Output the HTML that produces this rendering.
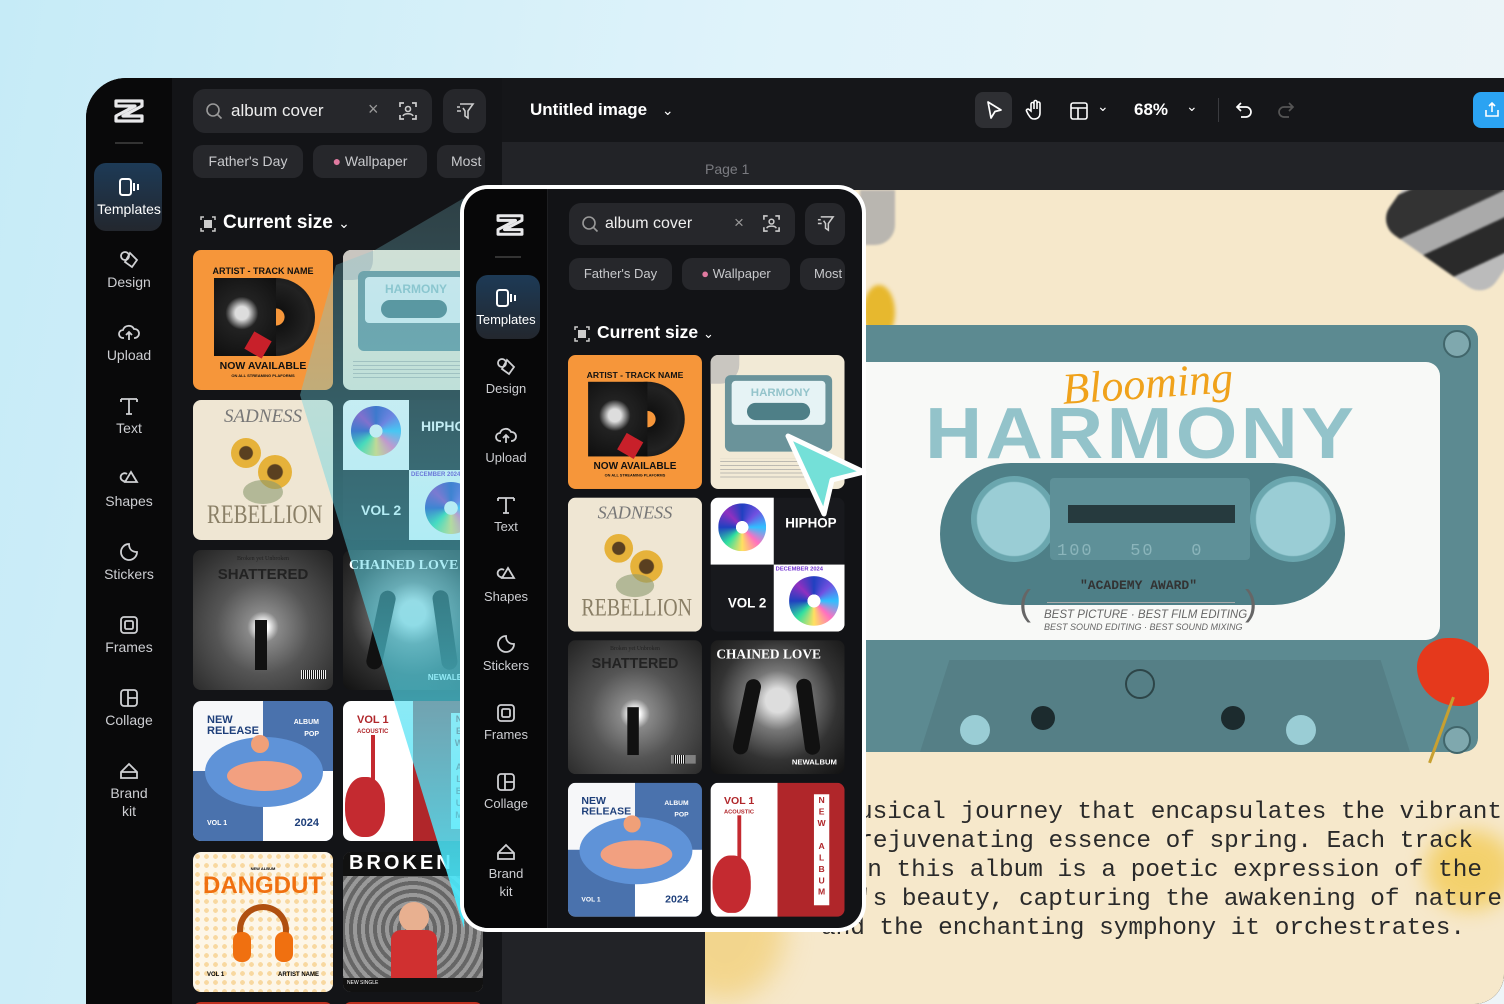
<!DOCTYPE html>
<html><head><meta charset="utf-8">
<style>
*{box-sizing:border-box;margin:0;padding:0}
body{width:1504px;height:1004px;overflow:hidden;position:relative;font-family:"Liberation Sans",sans-serif;background:linear-gradient(100deg,#c6ebf7 0%,#dff3fa 45%,#eef5f8 100%)}
.abs{position:absolute}
.win{left:86px;top:78px;width:1418px;height:926px;border-radius:40px 0 30px 0;overflow:hidden;background:#0a0a0b}
.side{left:0;top:0;width:86px;height:926px;background:#09090a}
.nav{position:absolute;left:0;width:86px;text-align:center;color:#cdced2;font-size:14px;line-height:18px}
.nav svg{display:block;margin:0 auto 3px}
.panel{left:86px;top:0;width:330px;height:926px;background:#131417;overflow:hidden}
.search{background:#26272b;border-radius:12px}
.chip{background:#26272b;border-radius:10px;color:#c8c9cc;font-size:14px;text-align:center;white-space:nowrap;overflow:hidden}
.card{position:absolute;width:140px;height:140px;border-radius:8px;overflow:hidden}
.cd{position:absolute;border-radius:50%;background:radial-gradient(circle,#fff 0 18%,transparent 19%),conic-gradient(#2040c0,#7050e0,#30c0ff,#ff70c0,#ffe060,#30e0a0,#2040c0,#9030c0,#2040c0)}
.mono{font-family:"Liberation Mono",monospace}
.cond{font-family:"Liberation Sans Narrow","Liberation Sans",sans-serif;font-weight:bold}
</style></head><body>

<div class="abs win">
 <div class="abs side">
  <svg class="abs" style="left:27px;top:20px" width="32" height="26" viewBox="0 0 32 26"><path d="M3 3h26v5L10 18h19v5H3v-5l19-10H3z" fill="none" stroke="#e8e8ea" stroke-width="3.2" stroke-linejoin="round"/></svg>
  <div class="abs" style="left:29px;top:64px;width:28px;height:2px;background:#333"></div>
  <div class="abs" style="left:8px;top:85px;width:68px;height:68px;border-radius:12px;background:linear-gradient(180deg,#1d3a56,#23272e)"></div>
  <div class="nav" style="top:99px;color:#fff"><svg width="22" height="20" viewBox="0 0 22 20"><rect x="2" y="2" width="11" height="16" rx="2.5" fill="none" stroke="#fff" stroke-width="2"/><path d="M16 6v8M20 7v6" stroke="#fff" stroke-width="2"/></svg>Templates</div>
  <div class="nav" style="top:172px"><svg width="22" height="20" viewBox="0 0 22 20"><circle cx="7" cy="6" r="4" fill="none" stroke="#cfd0d3" stroke-width="1.8"/><path d="M12 3l7 7-5 7-7-5z" fill="none" stroke="#cfd0d3" stroke-width="1.8"/></svg>Design</div>
  <div class="nav" style="top:245px"><svg width="22" height="20" viewBox="0 0 22 20"><path d="M6 15H5a4 4 0 010-8 6 6 0 0111-1 4.5 4.5 0 011 9h-1M11 17V9M8 12l3-3 3 3" fill="none" stroke="#cfd0d3" stroke-width="1.8"/></svg>Upload</div>
  <div class="nav" style="top:318px"><svg width="22" height="20" viewBox="0 0 22 20"><path d="M3 3h16M11 3v15M3 3v3M19 3v3M8 18h6" fill="none" stroke="#cfd0d3" stroke-width="1.8"/></svg>Text</div>
  <div class="nav" style="top:391px"><svg width="22" height="20" viewBox="0 0 22 20"><path d="M9 5a4 4 0 10-1 7M13 3l6 10h-12z" fill="none" stroke="#cfd0d3" stroke-width="1.8"/></svg>Shapes</div>
  <div class="nav" style="top:464px"><svg width="22" height="20" viewBox="0 0 22 20"><path d="M19 10a8 8 0 11-8-8c0 5 3 8 8 8z" fill="none" stroke="#cfd0d3" stroke-width="1.8"/></svg>Stickers</div>
  <div class="nav" style="top:537px"><svg width="22" height="20" viewBox="0 0 22 20"><rect x="3" y="2" width="16" height="16" rx="3" fill="none" stroke="#cfd0d3" stroke-width="1.8"/><rect x="7" y="6" width="8" height="8" rx="1.5" fill="none" stroke="#cfd0d3" stroke-width="1.8"/></svg>Frames</div>
  <div class="nav" style="top:610px"><svg width="22" height="20" viewBox="0 0 22 20"><rect x="3" y="2" width="16" height="16" rx="3" fill="none" stroke="#cfd0d3" stroke-width="1.8"/><path d="M10 2v16M10 10h9" stroke="#cfd0d3" stroke-width="1.8"/></svg>Collage</div>
  <div class="nav" style="top:683px"><svg width="22" height="20" viewBox="0 0 22 20"><path d="M3 11l8-8 8 8v6H3zM3 11h16" fill="none" stroke="#cfd0d3" stroke-width="1.8"/></svg>Brand<br>kit</div>
 </div>

 <div class="abs panel">
  <div class="abs search" style="left:21px;top:11px;width:239px;height:44px">
   <svg class="abs" style="left:12px;top:13px" width="18" height="18" viewBox="0 0 18 18"><circle cx="8" cy="8" r="6" fill="none" stroke="#999" stroke-width="1.6"/><path d="M12.5 12.5l4 4" stroke="#999" stroke-width="1.6"/></svg>
   <div class="abs" style="left:38px;top:12px;color:#eee;font-size:17px">album cover</div>
   <div class="abs" style="left:175px;top:10px;color:#999;font-size:18px">×</div>
   <svg class="abs" style="left:205px;top:12px" width="20" height="20" viewBox="0 0 20 20"><path d="M2 6V2h4M14 2h4v4M18 14v4h-4M6 18H2v-4" fill="none" stroke="#ccc" stroke-width="1.7"/><circle cx="10" cy="8" r="2.5" fill="none" stroke="#ccc" stroke-width="1.6"/><path d="M5 15c1-3 9-3 10 0" fill="none" stroke="#ccc" stroke-width="1.6"/></svg>
  </div>
  <div class="abs search" style="left:271px;top:11px;width:43px;height:44px">
   <svg class="abs" style="left:12px;top:12px" width="20" height="20" viewBox="0 0 20 20"><path d="M5 3h13l-5 7v7l-3-2v-5L8 7M2 6h3M2 10h4" fill="none" stroke="#ccc" stroke-width="1.6"/></svg>
  </div>
  <div class="abs chip" style="left:21px;top:67px;width:110px;height:33px;line-height:33px">Father's Day</div>
  <div class="abs chip" style="left:141px;top:67px;width:114px;height:33px;line-height:33px"><span style="color:#e07aa0">●</span> Wallpaper</div>
  <div class="abs chip" style="left:265px;top:67px;width:48px;height:33px;line-height:33px;text-align:left;padding-left:14px">Most</div>
  <svg class="abs" style="left:28px;top:138px" width="16" height="16" viewBox="0 0 16 16"><path d="M1 4V1h3M12 1h3v3M15 12v3h-3M4 15H1v-3" fill="none" stroke="#ccc" stroke-width="1.5"/><rect x="4" y="4" width="8" height="8" fill="#ccc"/></svg>
  <div class="abs" style="left:51px;top:134px;color:#fff;font-size:19px;font-weight:bold">Current size <span style="font-weight:normal;font-size:14px">⌄</span></div>
  <div id="lg"></div>
 </div>

 <div class="abs" style="left:416px;top:0;width:1002px;height:64px;background:#151619">
  <div class="abs" style="left:28px;top:22px;color:#fff;font-size:17px;font-weight:bold">Untitled image <span style="font-weight:normal;font-size:14px;margin-left:10px">⌄</span></div>
  <div class="abs" style="left:473px;top:14px;width:37px;height:36px;border-radius:8px;background:#2e2f33"></div>
  <svg class="abs" style="left:482px;top:22px" width="20" height="20" viewBox="0 0 20 20"><path d="M4 2l13 8-6 1.5L7 18z" fill="none" stroke="#fff" stroke-width="1.7" stroke-linejoin="round"/></svg>
  <svg class="abs" style="left:522px;top:21px" width="22" height="22" viewBox="0 0 22 22"><path d="M7 12V5a1.5 1.5 0 013 0v5V3a1.5 1.5 0 013 0v7V4.5a1.5 1.5 0 013 0V14c0 4-2.5 6-6 6-3 0-4-2-6-5l-1.5-3a1.5 1.5 0 012.5-1.5z" fill="none" stroke="#fff" stroke-width="1.6"/></svg>
  <svg class="abs" style="left:567px;top:23px" width="20" height="20" viewBox="0 0 20 20"><rect x="2" y="2" width="16" height="16" rx="2" fill="none" stroke="#fff" stroke-width="1.6"/><path d="M2 7h16M9 7v11" stroke="#fff" stroke-width="1.6"/></svg>
  <div class="abs" style="left:595px;top:20px;color:#fff;font-size:14px">⌄</div>
  <div class="abs" style="left:632px;top:22px;color:#fff;font-size:17px;font-weight:bold">68%</div>
  <div class="abs" style="left:684px;top:20px;color:#fff;font-size:14px">⌄</div>
  <div class="abs" style="left:716px;top:20px;width:1px;height:24px;background:#3a3b3f"></div>
  <svg class="abs" style="left:732px;top:22px" width="20" height="20" viewBox="0 0 20 20"><path d="M7 3L3 7l4 4M3 7h9a5 5 0 010 10H7" fill="none" stroke="#fff" stroke-width="1.7"/></svg>
  <svg class="abs" style="left:774px;top:22px" width="20" height="20" viewBox="0 0 20 20"><path d="M13 3l4 4-4 4M17 7H8a5 5 0 000 10h5" fill="none" stroke="#555" stroke-width="1.7"/></svg>
  <div class="abs" style="left:971px;top:14px;width:40px;height:36px;border-radius:8px 0 0 8px;background:#2ba3f2"></div>
  <svg class="abs" style="left:981px;top:23px" width="18" height="18" viewBox="0 0 18 18"><path d="M9 2v9M6 5l3-3 3 3M3 9v6h12V9" fill="none" stroke="#fff" stroke-width="1.6"/></svg>
 </div>

 <div class="abs" style="left:416px;top:64px;width:1002px;height:862px;background:#222327">
  <div class="abs" style="left:203px;top:19px;color:#7a7b80;font-size:14px">Page 1</div>
 </div>

 <div class="abs" style="left:619px;top:112px;width:799px;height:814px;background:#f6e8cb;overflow:hidden">
  <div class="abs" style="left:155px;top:0;width:35px;height:55px;background:#b9b6b0;border-radius:0 0 20px 0;filter:blur(1px)"></div>
  <div class="abs" style="left:690px;top:-20px;width:130px;height:100px;background:linear-gradient(120deg,#d0cdc8 0 20%,#333 20% 45%,#aaa 45% 60%,#2a2a2a 60% 80%,#bbb 80%);transform:rotate(35deg);border-radius:20px;filter:blur(1px)"></div>
  <div class="abs" style="left:158px;top:95px;width:32px;height:55px;background:#e7b82e;border-radius:50%;filter:blur(2px)"></div>
  <div class="abs" style="left:-40px;top:670px;width:120px;height:140px;background:#f0c450;border-radius:50%;filter:blur(14px);opacity:.5"></div>
  <div class="abs" style="left:720px;top:640px;width:90px;height:80px;background:#f2c230;border-radius:50%;filter:blur(10px);opacity:.6"></div>
  <div class="abs" style="left:100px;top:135px;width:673px;height:427px;background:#5c8a91;border-radius:14px"></div>
  <div class="abs" style="left:100px;top:172px;width:635px;height:278px;background:#f8f9f7;border-radius:0 14px 14px 0"></div>
  <div class="abs" style="left:220px;top:203px;color:#93c3ca;font-weight:bold;font-size:72px;letter-spacing:3px;transform:scaleX(1.1);transform-origin:left;line-height:1.15">HARMONY</div>
  <div class="abs" style="left:357px;top:168px;color:#f0a21b;font-family:'Liberation Serif',serif;font-style:italic;font-size:44px;transform:rotate(-4deg)">Blooming</div>
  <div class="abs" style="left:235px;top:273px;width:405px;height:142px;background:#4e7f87;border-radius:71px"></div>
  <div class="abs" style="left:266px;top:286px;width:86px;height:86px;border-radius:50%;background:radial-gradient(circle,#9acdd5 0 60%,#6aa6ae 62%)"></div>
  <div class="abs" style="left:545px;top:286px;width:86px;height:86px;border-radius:50%;background:radial-gradient(circle,#9acdd5 0 60%,#6aa6ae 62%)"></div>
  <div class="abs" style="left:345px;top:288px;width:200px;height:82px;background:#5e9098;border-radius:4px"></div>
  <div class="abs" style="left:363px;top:315px;width:167px;height:18px;background:#263a3e"></div>
  <div class="abs mono" style="left:352px;top:352px;color:#8bb5bb;font-size:17px;letter-spacing:2px">100&nbsp;&nbsp;&nbsp;50&nbsp;&nbsp;&nbsp;0</div>
  <div class="abs mono" style="left:375px;top:388px;color:#333;font-size:13px;font-weight:bold">"ACADEMY AWARD"</div>
  <div class="abs" style="left:342px;top:412px;width:188px;height:1px;background:#aaa"></div>
  <div class="abs" style="left:339px;top:419px;color:#666;font-size:11.5px;font-style:italic">BEST PICTURE · BEST FILM EDITING</div>
  <div class="abs" style="left:339px;top:432px;color:#666;font-size:9px;font-style:italic">BEST SOUND EDITING · BEST SOUND MIXING</div>
  <div class="abs" style="left:314px;top:392px;color:#666;font-size:36px">(</div>
  <div class="abs" style="left:540px;top:392px;color:#666;font-size:36px">)</div>
  <div class="abs" style="left:215px;top:470px;width:490px;height:92px;background:#557f86;clip-path:polygon(6% 0,94% 0,100% 100%,0 100%)"></div>
  <div class="abs" style="left:420px;top:479px;width:30px;height:30px;border-radius:50%;border:2px solid #2d4548"></div>
  <div class="abs" style="left:255px;top:525px;width:30px;height:30px;border-radius:50%;background:#9acdd5"></div>
  <div class="abs" style="left:326px;top:516px;width:24px;height:24px;border-radius:50%;background:#1c2b2e"></div>
  <div class="abs" style="left:516px;top:516px;width:24px;height:24px;border-radius:50%;background:#1c2b2e"></div>
  <div class="abs" style="left:581px;top:525px;width:30px;height:30px;border-radius:50%;background:#9acdd5"></div>
  <div class="abs" style="left:738px;top:140px;width:28px;height:28px;border-radius:50%;background:#7fa8ae;border:2px solid #41666b"></div>
  <div class="abs" style="left:738px;top:536px;width:28px;height:28px;border-radius:50%;background:#7fa8ae;border:2px solid #41666b"></div>
  <div class="abs" style="left:712px;top:448px;width:72px;height:68px;background:#e5391c;border-radius:45% 55% 40% 60%"></div>
  <div class="abs" style="left:735px;top:505px;width:3px;height:70px;background:#c8a030;transform:rotate(20deg)"></div>
  <div class="abs mono" style="right:2px;top:609px;font-size:24.4px;color:#2a2a2a;white-space:nowrap">This album is a musical journey that encapsulates the vibrant</div>
  <div class="abs mono" style="right:31px;top:638px;font-size:24.4px;color:#2a2a2a;white-space:nowrap">and rejuvenating essence of spring. Each track</div>
  <div class="abs mono" style="right:22px;top:667px;font-size:24.4px;color:#2a2a2a;white-space:nowrap">within this album is a poetic expression of the</div>
  <div class="abs mono" style="right:2px;top:696px;font-size:24.4px;color:#2a2a2a;white-space:nowrap">season's beauty, capturing the awakening of nature</div>
  <div class="abs mono" style="right:39px;top:725px;font-size:24.4px;color:#2a2a2a;white-space:nowrap">and the enchanting symphony it orchestrates.</div>
 </div>
</div>

<svg class="abs" style="left:0;top:0" width="1504" height="1004">
 <defs><linearGradient id="wg" x1="0" y1="0" x2="0" y2="1"><stop offset="0" stop-color="#7fc6d2" stop-opacity=".25"/><stop offset=".5" stop-color="#5ad8ea" stop-opacity=".5"/><stop offset="1" stop-color="#48ecff" stop-opacity=".95"/></linearGradient></defs>
 <polygon points="375,250 464,198 464,928 300,395 336,265" fill="url(#wg)"/>
</svg>

<div class="abs" style="left:460px;top:185px;width:406px;height:747px;border-radius:28px;background:#fff;padding:4px">
 <div style="position:relative;width:398px;height:739px;border-radius:24px;background:#121316;overflow:hidden">
  <div class="abs" style="left:0;top:0;width:84px;height:739px;background:#070708;border-right:1px solid #1e1f22"></div>
  <svg class="abs" style="left:31px;top:24px" width="30" height="24" viewBox="0 0 32 26"><path d="M3 3h26v5L10 18h19v5H3v-5l19-10H3z" fill="none" stroke="#e8e8ea" stroke-width="3.2" stroke-linejoin="round"/></svg>
  <div class="abs" style="left:31px;top:67px;width:26px;height:2px;background:#333"></div>
  <div class="abs" style="left:12px;top:86px;width:64px;height:64px;border-radius:12px;background:linear-gradient(180deg,#1d3a56,#23272e)"></div>
  <div class="nav" style="width:84px;top:99px;color:#fff;font-size:13px"><svg width="22" height="20" viewBox="0 0 22 20"><rect x="2" y="2" width="11" height="16" rx="2.5" fill="none" stroke="#fff" stroke-width="2"/><path d="M16 6v8M20 7v6" stroke="#fff" stroke-width="2"/></svg>Templates</div>
  <div class="nav" style="width:84px;top:168px;font-size:13px"><svg width="22" height="20" viewBox="0 0 22 20"><circle cx="7" cy="6" r="4" fill="none" stroke="#cfd0d3" stroke-width="1.8"/><path d="M12 3l7 7-5 7-7-5z" fill="none" stroke="#cfd0d3" stroke-width="1.8"/></svg>Design</div>
  <div class="nav" style="width:84px;top:237px;font-size:13px"><svg width="22" height="20" viewBox="0 0 22 20"><path d="M6 15H5a4 4 0 010-8 6 6 0 0111-1 4.5 4.5 0 011 9h-1M11 17V9M8 12l3-3 3 3" fill="none" stroke="#cfd0d3" stroke-width="1.8"/></svg>Upload</div>
  <div class="nav" style="width:84px;top:306px;font-size:13px"><svg width="22" height="20" viewBox="0 0 22 20"><path d="M3 3h16M11 3v15M3 3v3M19 3v3M8 18h6" fill="none" stroke="#cfd0d3" stroke-width="1.8"/></svg>Text</div>
  <div class="nav" style="width:84px;top:376px;font-size:13px"><svg width="22" height="20" viewBox="0 0 22 20"><path d="M9 5a4 4 0 10-1 7M13 3l6 10h-12z" fill="none" stroke="#cfd0d3" stroke-width="1.8"/></svg>Shapes</div>
  <div class="nav" style="width:84px;top:445px;font-size:13px"><svg width="22" height="20" viewBox="0 0 22 20"><path d="M19 10a8 8 0 11-8-8c0 5 3 8 8 8z" fill="none" stroke="#cfd0d3" stroke-width="1.8"/></svg>Stickers</div>
  <div class="nav" style="width:84px;top:514px;font-size:13px"><svg width="22" height="20" viewBox="0 0 22 20"><rect x="3" y="2" width="16" height="16" rx="3" fill="none" stroke="#cfd0d3" stroke-width="1.8"/><rect x="7" y="6" width="8" height="8" rx="1.5" fill="none" stroke="#cfd0d3" stroke-width="1.8"/></svg>Frames</div>
  <div class="nav" style="width:84px;top:583px;font-size:13px"><svg width="22" height="20" viewBox="0 0 22 20"><rect x="3" y="2" width="16" height="16" rx="3" fill="none" stroke="#cfd0d3" stroke-width="1.8"/><path d="M10 2v16M10 10h9" stroke="#cfd0d3" stroke-width="1.8"/></svg>Collage</div>
  <div class="nav" style="width:84px;top:653px;font-size:13px"><svg width="22" height="20" viewBox="0 0 22 20"><path d="M3 11l8-8 8 8v6H3zM3 11h16" fill="none" stroke="#cfd0d3" stroke-width="1.8"/></svg>Brand<br>kit</div>

  <div class="abs search" style="left:105px;top:14px;width:226px;height:42px">
   <svg class="abs" style="left:12px;top:12px" width="18" height="18" viewBox="0 0 18 18"><circle cx="8" cy="8" r="6" fill="none" stroke="#999" stroke-width="1.6"/><path d="M12.5 12.5l4 4" stroke="#999" stroke-width="1.6"/></svg>
   <div class="abs" style="left:36px;top:12px;color:#eee;font-size:16px">album cover</div>
   <div class="abs" style="left:165px;top:10px;color:#999;font-size:17px">×</div>
   <svg class="abs" style="left:193px;top:11px" width="19" height="19" viewBox="0 0 20 20"><path d="M2 6V2h4M14 2h4v4M18 14v4h-4M6 18H2v-4" fill="none" stroke="#ccc" stroke-width="1.7"/><circle cx="10" cy="8" r="2.5" fill="none" stroke="#ccc" stroke-width="1.6"/><path d="M5 15c1-3 9-3 10 0" fill="none" stroke="#ccc" stroke-width="1.6"/></svg>
  </div>
  <div class="abs search" style="left:341px;top:14px;width:40px;height:42px">
   <svg class="abs" style="left:11px;top:11px" width="19" height="19" viewBox="0 0 20 20"><path d="M5 3h13l-5 7v7l-3-2v-5L8 7M2 6h3M2 10h4" fill="none" stroke="#ccc" stroke-width="1.6"/></svg>
  </div>
  <div class="abs chip" style="left:105px;top:69px;width:103px;height:32px;line-height:32px;font-size:13px">Father's Day</div>
  <div class="abs chip" style="left:218px;top:69px;width:108px;height:32px;line-height:32px;font-size:13px"><span style="color:#e07aa0">●</span> Wallpaper</div>
  <div class="abs chip" style="left:336px;top:69px;width:45px;height:32px;line-height:32px;font-size:13px;text-align:left;padding-left:14px">Most</div>
  <svg class="abs" style="left:110px;top:137px" width="16" height="16" viewBox="0 0 16 16"><path d="M1 4V1h3M12 1h3v3M15 12v3h-3M4 15H1v-3" fill="none" stroke="#ccc" stroke-width="1.5"/><rect x="4" y="4" width="8" height="8" fill="#ccc"/></svg>
  <div class="abs" style="left:133px;top:133px;color:#fff;font-size:17.5px;font-weight:bold">Current size <span style="font-weight:normal;font-size:13px">⌄</span></div>
  <div id="pg" class="abs" style="left:104px;top:166px;width:290px;height:580px;transform:scale(0.957);transform-origin:0 0"></div>
 </div>
</div>

<svg class="abs" style="left:780px;top:428px" width="95" height="95" viewBox="0 0 95 95"><path d="M8 8L84 44 52 52 44 86z" fill="#74e0d8" stroke="#fff" stroke-width="5" stroke-linejoin="round"/></svg>

<script>
function cards(){
 const c=[];
 c.push(`<div style="background:#f6963a;width:100%;height:100%;position:relative">
 <div class="cond" style="position:absolute;top:16px;width:100%;text-align:center;font-size:9px;color:#111">ARTIST - TRACK NAME</div>
 <div style="position:absolute;left:44px;top:28px;width:78px;height:78px;border-radius:50%;background:radial-gradient(circle,#f6963a 0 15%,#111 16%,#222 60%,#111)"></div>
 <div style="position:absolute;left:21px;top:28px;width:62px;height:78px;background:radial-gradient(circle at 45% 45%,#ddd 0 12%,#222 30%,#0c0c0c)"></div>
 <div style="position:absolute;left:55px;top:85px;width:20px;height:20px;background:#c8202a;transform:rotate(30deg)"></div>
 <div style="position:absolute;top:110px;width:100%;text-align:center;font-size:10.5px;font-weight:bold;color:#111">NOW AVAILABLE</div>
 <div style="position:absolute;top:123px;width:100%;text-align:center;font-size:4px;font-weight:bold;color:#111">ON ALL STREAMING PLAFORMS</div></div>`);
 c.push(`<div style="background:#f2ead6;width:100%;height:100%;position:relative">
 <div style="position:absolute;left:0;top:0;width:30px;height:30px;background:#c9c6c0;border-radius:0 0 20px 0"></div>
 <div style="position:absolute;left:15px;top:21px;width:112px;height:80px;background:#6a939a;border-radius:6px"></div>
 <div style="position:absolute;left:22px;top:27px;width:98px;height:46px;background:#e6f3f5;border-radius:4px"></div>
 <div style="position:absolute;left:28px;top:32px;width:90px;font-size:12px;font-weight:bold;color:#94c4cb;text-align:center">HARMONY</div>
 <div style="position:absolute;left:38px;top:50px;width:66px;height:18px;background:#4e7f87;border-radius:9px"></div>
 <div style="position:absolute;left:10px;top:108px;width:120px;height:22px;background:repeating-linear-gradient(#f2ead6 0 3px,#999 3px 4px);opacity:.6"></div></div>`);
 c.push(`<div style="background:#efe6d3;width:100%;height:100%;position:relative">
 <div style="position:absolute;top:6px;width:100%;text-align:center;font-style:italic;font-size:19px;color:#777;font-family:'Liberation Serif',serif">SADNESS</div>
 <div style="position:absolute;left:38px;top:38px;width:30px;height:30px;border-radius:50%;background:radial-gradient(#5a4020 30%,#e6b23a 35%)"></div>
 <div style="position:absolute;left:65px;top:55px;width:34px;height:34px;border-radius:50%;background:radial-gradient(#5a4020 30%,#e6b23a 35%)"></div>
 <div style="position:absolute;left:50px;top:80px;width:40px;height:24px;background:#8a9a70;border-radius:50%;opacity:.6"></div>
 <div style="position:absolute;top:100px;width:100%;text-align:center;font-size:26px;color:#8a7f66;font-family:'Liberation Serif',serif;transform:scaleX(.8)">REBELLION</div></div>`);
 c.push(`<div style="background:#18191d;width:100%;height:100%;position:relative">
 <div style="position:absolute;left:0;top:0;width:66px;height:70px;background:#fff"></div><div class="cd" style="left:8px;top:6px;width:50px;height:50px"></div>
 <div class="cond" style="position:absolute;left:78px;top:18px;font-size:14px;color:#fff">HIPHOP</div>
 <div style="position:absolute;left:66px;top:70px;width:74px;height:70px;background:#fff"></div><div class="cd" style="left:82px;top:82px;width:52px;height:52px"></div>
 <div style="position:absolute;left:68px;top:72px;font-size:6px;color:#7030d0;font-weight:bold">DECEMBER 2024</div>
 <div class="cond" style="position:absolute;left:18px;top:102px;font-size:14px;color:#fff">VOL 2</div></div>`);
 c.push(`<div style="background:radial-gradient(circle at 50% 55%,#fff 0 5%,#888 15%,#555 45%,#222);width:100%;height:100%;position:relative">
 <div style="position:absolute;top:6px;width:100%;text-align:center;font-size:6px;color:#222;font-family:'Liberation Serif',serif">Broken yet Unbroken</div>
 <div style="position:absolute;top:16px;width:100%;text-align:center;font-size:15px;font-weight:bold;color:#222">SHATTERED</div>
 <div style="position:absolute;left:62px;top:70px;width:12px;height:50px;background:#111"></div>
 <div style="position:absolute;left:108px;top:120px;width:25px;height:9px;background:repeating-linear-gradient(90deg,#eee 0 1px,#111 1px 2px)"></div></div>`);
 c.push(`<div style="background:radial-gradient(circle at 50% 45%,#ddd 0 12%,#777 30%,#333 60%,#111);width:100%;height:100%;position:relative">
 <div style="position:absolute;left:6px;top:8px;font-size:14px;font-weight:bold;color:#fff;font-family:'Liberation Serif',serif">CHAINED LOVE</div>
 <div style="position:absolute;left:30px;top:40px;width:16px;height:80px;background:#111;border-radius:8px;transform:rotate(12deg)"></div>
 <div style="position:absolute;left:94px;top:40px;width:16px;height:80px;background:#111;border-radius:8px;transform:rotate(-8deg)"></div>
 <div class="cond" style="position:absolute;right:8px;bottom:8px;font-size:8px;color:#fff">NEWALBUM</div></div>`);
 c.push(`<div style="background:linear-gradient(90deg,#f6f7f9 50%,#4a72ad 50%);width:100%;height:100%;position:relative">
 <div style="position:absolute;left:0;top:70px;width:70px;height:70px;background:#4a72ad"></div><div style="position:absolute;left:70px;top:70px;width:70px;height:70px;background:#fff"></div>
 <div style="position:absolute;left:12px;top:36px;width:118px;height:70px;border-radius:50%;background:#5f93d8"></div>
 <div style="position:absolute;left:34px;top:60px;width:75px;height:30px;border-radius:50%;background:#f2a080"></div>
 <div style="position:absolute;left:58px;top:34px;width:18px;height:18px;border-radius:50%;background:#f0a078"></div>
 <div class="cond" style="position:absolute;left:14px;top:14px;font-size:11px;line-height:11px;color:#1e3f7a">NEW<br>RELEASE</div>
 <div class="cond" style="position:absolute;right:14px;top:16px;font-size:7px;line-height:12px;color:#fff;text-align:right">ALBUM<br>POP</div>
 <div class="cond" style="position:absolute;left:14px;bottom:14px;font-size:7px;color:#fff">VOL 1</div>
 <div class="cond" style="position:absolute;right:14px;bottom:12px;font-size:11px;color:#1e3f7a">2024</div></div>`);
 c.push(`<div style="background:linear-gradient(90deg,#fff 50%,#b0262a 50%);width:100%;height:100%;position:relative">
 <div class="cond" style="position:absolute;left:14px;top:14px;font-size:11px;line-height:10px;color:#b0262a">VOL 1<br><span style="font-size:6px">ACOUSTIC</span></div>
 <div style="position:absolute;left:2px;top:76px;width:40px;height:60px;background:#c42a30;border-radius:45%"></div>
 <div style="position:absolute;left:28px;top:34px;width:4px;height:50px;background:#c42a30"></div>
 <div style="position:absolute;left:108px;top:12px;width:16px;height:116px;background:#fff;color:#b0262a;font-size:9px;font-weight:bold;text-align:center;line-height:12px">N<br>E<br>W<br><br>A<br>L<br>B<br>U<br>M</div></div>`);
 c.push(`<div style="background:#fdf6e8 radial-gradient(#f8d8a0 35%,transparent 40%) 0 0/9px 9px;width:100%;height:100%;position:relative">
 <div style="position:absolute;top:14px;width:100%;text-align:center;font-size:4px;font-weight:bold">NEW ALBUM</div>
 <div class="cond" style="position:absolute;top:20px;width:100%;text-align:center;font-size:24px;color:#f07010">DANGDUT</div>
 <div style="position:absolute;left:44px;top:52px;width:52px;height:52px;border:6px solid #b05010;border-bottom-color:transparent;border-radius:50%"></div>
 <div style="position:absolute;left:40px;top:80px;width:18px;height:30px;background:#f07010;border-radius:8px"></div>
 <div style="position:absolute;left:82px;top:80px;width:18px;height:30px;background:#f07010;border-radius:8px"></div>
 <div style="position:absolute;left:14px;bottom:14px;font-size:6px;font-weight:bold">VOL 1</div><div style="position:absolute;right:14px;bottom:14px;font-size:6px;font-weight:bold">ARTIST NAME</div></div>`);
 c.push(`<div style="background:repeating-radial-gradient(circle at 50% 55%,#999 0 4px,#666 4px 8px);width:100%;height:100%;position:relative">
 <div style="position:absolute;left:0;top:0;width:100%;height:24px;background:#111;color:#fff;font-weight:bold;font-size:20px;letter-spacing:3px;padding-left:6px">BROKEN</div>
 <div style="position:absolute;left:56px;top:50px;width:30px;height:30px;border-radius:50%;background:#e8b090"></div>
 <div style="position:absolute;left:48px;top:78px;width:46px;height:50px;background:#d03030;border-radius:10px 10px 0 0"></div>
 <div style="position:absolute;left:0;bottom:0;width:100%;height:14px;background:#111;color:#fff;font-size:5px;padding:2px 4px">NEW SINGLE</div></div>`);
 return c;
}
const c=cards();
let h='';
const ly=[172,322,472,623,774,924];
for(let i=0;i<12;i++){const r=Math.floor(i/2),col=i%2;
 h+=`<div class="card" style="left:${21+col*150}px;top:${ly[r]}px">${i<10?c[i]:'<div style="background:#c03020;width:100%;height:100%"></div>'}</div>`;}
document.getElementById('lg').innerHTML=h;
let p='';
for(let i=0;i<8;i++){const r=Math.floor(i/2),col=i%2;
 p+=`<div class="card" style="left:${col*149}px;top:${r*149}px">${c[i]}</div>`;}
document.getElementById('pg').innerHTML=p;
</script>
</body></html>
